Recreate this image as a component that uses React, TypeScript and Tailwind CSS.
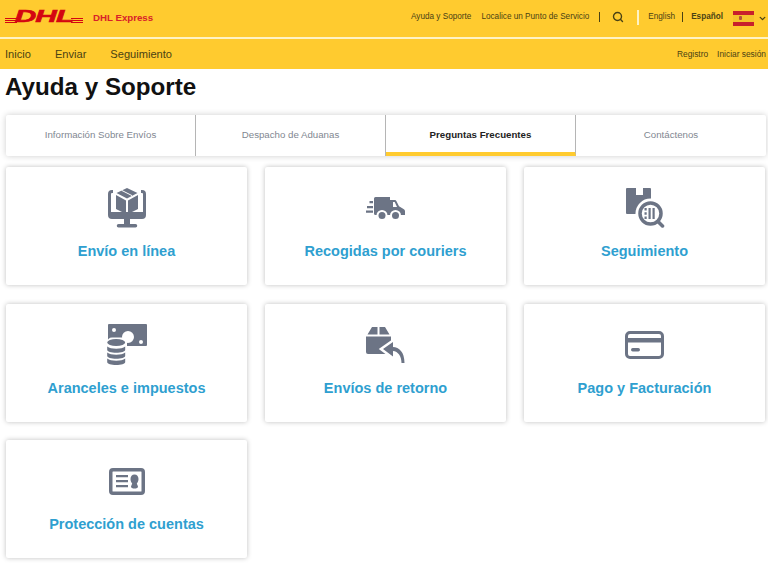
import { ChevronDown, Search } from "lucide-react"

const tabs = [
  { label: "Información Sobre Envíos" },
  { label: "Despacho de Aduanas" },
  { label: "Preguntas Frecuentes", active: true },
  { label: "Contáctenos" },
]

function BoxScreenIcon() {
  return (
    <svg width="40" height="41" viewBox="0 0 40 41" fill="#6c7485">
      <path d="M6 2H5a4 4 0 0 0-4 4v21a4 4 0 0 0 4 4h30a4 4 0 0 0 4-4V6a4 4 0 0 0-4-4h-1v3h1a1 1 0 0 1 1 1v18H4V6a1 1 0 0 1 1-1h1z" />
      <path d="M17 31h6v5h-6zM11.500 36h17a1.500 1.500 0 0 1 0 3.500h-17a1.500 1.500 0 0 1 0-3.500z" />
      <path d="M20 0l10.500 5L20 10.500 9.500 5zM9 7l10 5.500V26L9 21zM21 12.500L31 7v14l-10 5z" />
      <path d="M14.500 2.300l10.500 5.300" stroke="#fff" strokeWidth="1" fill="none" />
    </svg>
  )
}

function TruckIcon() {
  return (
    <svg width="39" height="23" viewBox="0 0 39 23" fill="#6c7485">
      <path
        d="M8 1.500A1.500 1.500 0 0 1 9.500 0H24v3h4.500c1 0 1.500.5 2 1.300l2.500 5L37.500 12c1 .5 1.500 1.300 1.500 2.500V18H9.500A1.500 1.500 0 0 1 8 16.500zM27 5v5h4l-2.300-5z"
        fillRule="evenodd"
      />
      <circle cx="16" cy="18.500" r="5.500" fill="#fff" />
      <circle cx="29.500" cy="18.500" r="5.500" fill="#fff" />
      <circle cx="16" cy="18.500" r="3.500" />
      <circle cx="29.500" cy="18.500" r="3.500" />
      <path d="M3.500 4H7v2.200H3.500zM1 9h6v2.200H1zM0 13.500h7v2.200H0z" />
    </svg>
  )
}

function TrackIcon() {
  return (
    <svg width="40" height="40" viewBox="0 0 40 40" fill="#6c7485">
      <path d="M1 1a1 1 0 0 1 1-1h9v7h7V0h7a1 1 0 0 1 1 1v25H2a1 1 0 0 1-1-1z" />
      <circle cx="25.500" cy="25.500" r="15" fill="#fff" />
      <circle cx="25.500" cy="25.500" r="10.500" fill="#fff" stroke="#6c7485" strokeWidth="3.500" />
      <path d="M33 31l6 6a1.800 1.800 0 0 1-2.500 2.500l-6-6z" />
      <path d="M19.500 20h2.200v2.500h-2.200zM19.500 24.300h2.200v2.500h-2.200zM19.500 28.600h2.200v2.500h-2.200zM23.500 20h2.200v11h-2.200zM27.500 20h2.200v11h-2.200z" />
    </svg>
  )
}

function MoneyIcon() {
  return (
    <svg width="40" height="41" viewBox="0 0 40 41" fill="#6c7485">
      <path
        d="M2 0h37a1 1 0 0 1 1 1v20a1 1 0 0 1-1 1H2a1 1 0 0 1-1-1V1a1 1 0 0 1 1-1zM21 7a6 6 0 1 0 0 12 6 6 0 0 0 0-12zM7 4a2 2 0 1 0 0 4 2 2 0 0 0 0-4zM34 16a2 2 0 1 0 0 4 2 2 0 0 0 0-4z"
        fillRule="evenodd"
      />
      <rect x="0" y="13.500" width="20" height="27.500" rx="5" fill="#fff" />
      <ellipse cx="9.200" cy="18.500" rx="9" ry="3.500" />
      <path d="M.2 22.500c2 1.500 5 2.200 9 2.200s7-.7 9-2.200v3.200c0 1.800-4 3.100-9 3.100s-9-1.300-9-3.100zM.2 28.500c2 1.500 5 2.200 9 2.200s7-.7 9-2.200v3.200c0 1.800-4 3.100-9 3.100s-9-1.300-9-3.100zM.2 34.500c2 1.500 5 2.200 9 2.200s7-.7 9-2.200V38c0 1.800-4 3-9 3s-9-1.200-9-3z" />
    </svg>
  )
}

function ReturnIcon() {
  return (
    <svg width="40" height="38" viewBox="0 0 40 38" fill="#6c7485">
      <path d="M1.500 8.500L6 1h5.500v7.500zM13.500 1H19l4.500 7.500h-10z" />
      <path d="M0 10.500h25V28H2a2 2 0 0 1-2-2z" />
      <path
        d="M17 23l10-7v5c6 0 11.500 5 11.500 16h-3c0-7-3.500-11.500-8.500-12v5.500z"
        stroke="#fff"
        strokeWidth="5"
        fill="#fff"
      />
      <path d="M17 23l10-7v5c6 0 11.500 5 11.500 16h-3c0-7-3.500-11.500-8.500-12v5.500z" />
    </svg>
  )
}

function CardIcon() {
  return (
    <svg width="39" height="28" viewBox="0 0 39 28" fill="#6c7485">
      <path
        d="M5 0h29a5 5 0 0 1 5 5v18a5 5 0 0 1-5 5H5a5 5 0 0 1-5-5V5a5 5 0 0 1 5-5zm0 3a2 2 0 0 0-2 2v2h33V5a2 2 0 0 0-2-2zM3 11.500V23a2 2 0 0 0 2 2h29a2 2 0 0 0 2-2V11.500z"
        fillRule="evenodd"
      />
      <rect x="6" y="17" width="9" height="3.500" rx="1.700" />
    </svg>
  )
}

function IdIcon() {
  return (
    <svg width="36" height="27" viewBox="0 0 36 27" fill="#6c7485">
      <path
        d="M4 0h28a4 4 0 0 1 4 4v19a4 4 0 0 1-4 4H4a4 4 0 0 1-4-4V4a4 4 0 0 1 4-4zm0 3.500a.5.5 0 0 0-.5.500v19a.5.5 0 0 0 .5.500h28a.5.5 0 0 0 .5-.500V4a.5.5 0 0 0-.5-.500z"
        fillRule="evenodd"
      />
      <path d="M7 7h12v2.200H7zM7 12h12v2.200H7zM7 17h12v2.200H7z" />
      <path d="M25.500 6.500c2.500 0 4 2 4 4.500 0 2-1 3.500-1.700 4.500l1.200 3c0 1.500-1.500 2-3.500 2s-3.500-.5-3.500-2l1.200-3c-.7-1-1.700-2.500-1.700-4.500 0-2.500 1.500-4.500 4-4.500z" />
    </svg>
  )
}

const cards = [
  { label: "Envío en línea", icon: <BoxScreenIcon /> },
  { label: "Recogidas por couriers", icon: <TruckIcon /> },
  { label: "Seguimiento", icon: <TrackIcon /> },
  { label: "Aranceles e impuestos", icon: <MoneyIcon /> },
  { label: "Envíos de retorno", icon: <ReturnIcon /> },
  { label: "Pago y Facturación", icon: <CardIcon /> },
  { label: "Protección de cuentas", icon: <IdIcon /> },
]

function LogoStripes() {
  return (
    <div className="mt-[6px] flex w-[12px] shrink-0 flex-col gap-[1px]">
      <span className="h-[1px] bg-[#d40511]" />
      <span className="h-[1px] bg-[#d40511]" />
      <span className="h-[1px] bg-[#d40511]" />
    </div>
  )
}

function DhlLogo() {
  return (
    <div className="flex w-[78px] items-center">
      <LogoStripes />
      <span className="w-[54px] shrink-0 scale-x-[1.75] text-center text-[17px] leading-[14px] font-black tracking-[-0.5px] text-[#d40511] italic [-webkit-text-stroke:0.6px_#d40511]">
        DHL
      </span>
      <LogoStripes />
    </div>
  )
}

function SpainFlag() {
  return (
    <div className="flex h-[15px] w-[21px] flex-col">
      <span className="h-[4px] bg-[#c8202c]" />
      <span className="flex h-[7px] items-center bg-[#f5c32c] pl-[6px]">
        <span className="h-[4px] w-[3px] rounded-[1px] bg-[#b5523b]" />
      </span>
      <span className="h-[4px] bg-[#c8202c]" />
    </div>
  )
}

export default function App() {
  return (
    <div className="h-[563px] w-[768px] overflow-hidden bg-white font-['Liberation_Sans',Arial,sans-serif]">
      <header className="bg-[#ffcb2f] text-[#4a4214]">
        <div className="flex h-[37px] items-center pb-[3px] pl-[5px]">
          <DhlLogo />
          <span className="mt-[2px] ml-[10px] text-[9.7px] font-bold text-[#d8202a]">DHL Express</span>
          <div className="ml-auto flex items-center text-[8.2px]">
            <span>Ayuda y Soporte</span>
            <span className="ml-[10px]">Localice un Punto de Servicio</span>
            <span className="ml-[10px] h-[10px] w-[1px] bg-[#4a4214]" />
            <Search className="ml-[12px] h-[12px] w-[12px]" strokeWidth={2.8} />
            <span className="ml-[13px] h-[15px] w-[2px] bg-[#fff3c4]" />
            <span className="ml-[9px]">English</span>
            <span className="ml-[7px] h-[10px] w-[1px] bg-[#4a4214]" />
            <span className="ml-[8px] font-bold">Español</span>
            <div className="mt-[2px] ml-[10px]">
              <SpainFlag />
            </div>
            <ChevronDown className="mt-[3px] mr-[1px] ml-[4px] h-[9px] w-[9px]" strokeWidth={3.5} />
          </div>
        </div>
        <div className="h-[2px] bg-[#fff3c4]" />
        <nav className="flex h-[30px] items-center justify-between pr-[2px] pl-[5px]">
          <div className="flex gap-[24px] text-[11.1px]">
            <span>Inicio</span>
            <span>Enviar</span>
            <span>Seguimiento</span>
          </div>
          <div className="flex gap-[9px] text-[8.4px]">
            <span>Registro</span>
            <span>Iniciar sesión</span>
          </div>
        </nav>
      </header>

      <main className="pl-[6px]">
        <h1 className="-ml-[1px] h-[46px] pt-[3px] text-[24.200px] leading-[30px] font-bold text-[#111]">
          Ayuda y Soporte
        </h1>

        <div className="flex h-[41px] w-[760px] rounded-[2px] bg-white shadow-[0_0_6px_rgba(0,0,0,0.2)]">
          {tabs.map((tab, i) => (
            <div
              key={tab.label}
              className={`flex w-[190px] items-center justify-center text-[9.7px] ${
                i < tabs.length - 1 ? "border-r border-[#b5b5b5]" : ""
              } ${
                tab.active
                  ? "border-b-[4px] border-b-[#ffcb2f] pt-[4px] font-bold text-[#222]"
                  : "text-[#7f8791]"
              }`}
            >
              {tab.label}
            </div>
          ))}
        </div>

        <div className="mt-[11px] grid w-[759px] grid-cols-[241px_241px_241px] gap-x-[18px] gap-y-[18.500px]">
          {cards.map((card) => (
            <div
              key={card.label}
              className="flex h-[118px] flex-col items-center rounded-[2px] bg-white shadow-[0_0_5px_rgba(0,0,0,0.25)]"
            >
              <div className="flex h-[76px] items-center justify-center pt-[6px]">{card.icon}</div>
              <span className="-mt-[1px] text-[14.500px] leading-[18px] font-bold text-[#2f9fd0]">{card.label}</span>
            </div>
          ))}
        </div>
      </main>
    </div>
  )
}
